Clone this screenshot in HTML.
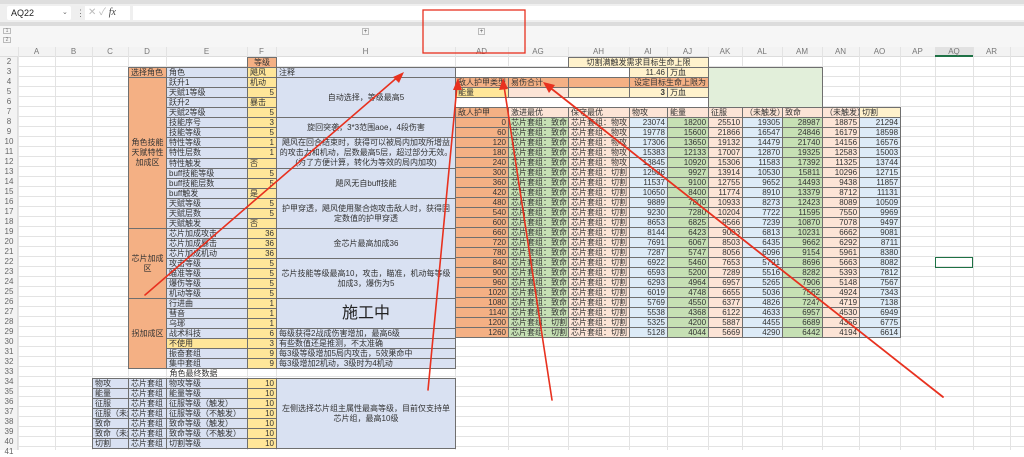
<!DOCTYPE html>
<html><head><meta charset="utf-8"><style>
*{margin:0;padding:0;box-sizing:border-box}
body{width:1024px;height:450px;overflow:hidden;background:#fff;font-family:"Liberation Sans","Noto Sans CJK SC",sans-serif;font-size:8px;color:#333;position:relative}
.abs{position:absolute}
.grid{position:absolute;left:18px;top:57px;width:1006px;height:393px;background:repeating-linear-gradient(to bottom,transparent 0,transparent 9px,#e3e3e3 9px,#e3e3e3 10px)}
.vl{position:absolute;top:47px;width:1px;height:403px;background:#e3e3e3}
table{position:absolute;border-collapse:collapse;table-layout:fixed}
td{height:10px;padding:0 2px;line-height:9px;white-space:nowrap;overflow:hidden;border:1px solid #6f6f6f;font-size:8px}
td.n{border:none;background:transparent}
.o{background:#f4b084}.y{background:#ffe699}.b{background:#d9e1f2}.lo{background:#fce4d6}.g{background:#c6e0b4}.lb{background:#ddebf7}.ly{background:#fff2cc}.lg{background:#e2efda}.w{background:#fff}
.c{text-align:center}.r{text-align:right}
td.wr{white-space:normal;line-height:10px;text-align:center}
.hdr{position:absolute;top:47px;height:10px;font-size:8px;color:#777;text-align:center;line-height:10px}
</style></head><body>
<div class="abs" style="left:0;top:0;width:1024px;height:22px;background:#efefef"></div>
<div class="abs" style="left:0;top:0;width:1024px;height:4px;background:#dedede"></div>
<div class="abs" style="left:7px;top:6px;width:64px;height:14px;background:#fff;border-radius:2px;font-size:9px;line-height:14px;padding-left:4px;color:#222">AQ22<span style="position:absolute;left:55px;color:#666;font-size:7px">⌄</span></div>
<div class="abs" style="left:76px;top:8px;font-size:9px;color:#777">⋮</div>
<div class="abs" style="left:85px;top:6px;width:45px;height:14px;background:#fff;font-size:10px;line-height:14px;color:#bbb;padding-left:3px">✕ ✓ <i style="color:#444;font-family:'Liberation Serif',serif">fx</i></div>
<div class="abs" style="left:133px;top:6px;width:891px;height:14px;background:#fff"></div>
<div class="abs" style="left:0;top:22px;width:1024px;height:4px;background:#dcdcdc"></div>
<div class="abs" style="left:0;top:26px;width:1024px;height:21px;background:#f6f6f6"></div>
<div class="abs" style="left:3px;top:28px;width:8px;height:6px;border:1px solid #bbb;font-size:5px;line-height:5px;text-align:center;color:#777">1</div>
<div class="abs" style="left:3px;top:37px;width:8px;height:6px;border:1px solid #bbb;font-size:5px;line-height:5px;text-align:center;color:#777">2</div>
<div class="abs" style="left:362px;top:28px;width:7px;height:7px;border:1px solid #bbb;font-size:6px;line-height:6px;text-align:center;color:#555">+</div>
<div class="abs" style="left:478px;top:28px;width:7px;height:7px;border:1px solid #bbb;font-size:6px;line-height:6px;text-align:center;color:#555">+</div>
<div class="abs" style="left:0;top:47px;width:1024px;height:10px;background:#f3f3f3;border-bottom:1px solid #ddd"></div>
<div class="abs" style="left:0;top:57px;width:18px;height:393px;background:#f3f3f3;border-right:1px solid #ddd"></div>
<div class="grid"></div>
<div class="vl" style="left:18px"></div><div class="vl" style="left:55px"></div><div class="vl" style="left:92px"></div><div class="vl" style="left:128px"></div><div class="vl" style="left:166px"></div><div class="vl" style="left:247px"></div><div class="vl" style="left:276px"></div><div class="vl" style="left:455px"></div><div class="vl" style="left:508px"></div><div class="vl" style="left:568px"></div><div class="vl" style="left:629px"></div><div class="vl" style="left:667px"></div><div class="vl" style="left:708px"></div><div class="vl" style="left:742px"></div><div class="vl" style="left:782px"></div><div class="vl" style="left:822px"></div><div class="vl" style="left:859px"></div><div class="vl" style="left:900px"></div><div class="vl" style="left:935px"></div><div class="vl" style="left:973px"></div><div class="vl" style="left:1010px"></div>
<div class="hdr" style="left:18px;width:37px">A</div><div class="hdr" style="left:55px;width:37px">B</div><div class="hdr" style="left:92px;width:36px">C</div><div class="hdr" style="left:128px;width:38px">D</div><div class="hdr" style="left:166px;width:81px">E</div><div class="hdr" style="left:247px;width:29px">F</div><div class="hdr" style="left:276px;width:179px">H</div><div class="hdr" style="left:455px;width:53px">AD</div><div class="hdr" style="left:508px;width:60px">AG</div><div class="hdr" style="left:568px;width:61px">AH</div><div class="hdr" style="left:629px;width:38px">AI</div><div class="hdr" style="left:667px;width:41px">AJ</div><div class="hdr" style="left:708px;width:34px">AK</div><div class="hdr" style="left:742px;width:40px">AL</div><div class="hdr" style="left:782px;width:40px">AM</div><div class="hdr" style="left:822px;width:37px">AN</div><div class="hdr" style="left:859px;width:41px">AO</div><div class="hdr" style="left:900px;width:35px">AP</div><div class="hdr" style="left:935px;width:38px;background:#e2e2e2;border-bottom:2px solid #1e7145">AQ</div><div class="hdr" style="left:973px;width:37px">AR</div>
<div class="abs" style="left:0;top:57px;width:18px;font-size:8px;color:#666;text-align:center;line-height:10px">2<br>3<br>4<br>5<br>6<br>7<br>8<br>9<br>10<br>11<br>12<br>13<br>14<br>15<br>16<br>17<br>18<br>19<br>20<br>21<br>22<br>23<br>24<br>25<br>26<br>27<br>28<br>29<br>30<br>31<br>32<br>33<br>34<br>35<br>36<br>37<br>38<br>39<br>40<br>41</div>

<table style="left:92px;top:57px;width:363px">
<colgroup><col style="width:36px"><col style="width:38px"><col style="width:81px"><col style="width:29px"><col style="width:179px"></colgroup>
<tr><td class="n"></td><td class="n"></td><td class="n"></td><td class="o c">等级</td><td class="n"></td></tr>
<tr><td class="n"></td><td class="o">选择角色</td><td class="b">角色</td><td class="y">飓风</td><td class="b">注释</td></tr>
<tr><td class="n"></td><td class="o wr" rowspan="15">角色技能<br>天赋特性<br>加成区</td><td class="b">跃升1</td><td class="y">机动</td><td class="b wr" rowspan="4">自动选择，等级最高5</td></tr>
<tr><td class="n"></td><td class="b">天赋1等级</td><td class="y r">5</td></tr>
<tr><td class="n"></td><td class="b">跃升2</td><td class="y">暴击</td></tr>
<tr><td class="n"></td><td class="b">天赋2等级</td><td class="y r">5</td></tr>
<tr><td class="n"></td><td class="b">技能序号</td><td class="y r">3</td><td class="b wr" rowspan="2">旋回突袭，3*3范围aoe，4段伤害</td></tr>
<tr><td class="n"></td><td class="b">技能等级</td><td class="y r">5</td></tr>
<tr><td class="n"></td><td class="b">特性等级</td><td class="y r">1</td><td class="b wr" rowspan="3">飓风在回合结束时，获得可以被局内加攻所增益的攻击力和机动，层数最高5层，超过部分无效。(为了方便计算，转化为等效的局内加攻)</td></tr>
<tr><td class="n"></td><td class="b">特性层数</td><td class="y r">1</td></tr>
<tr><td class="n"></td><td class="b">特性触发</td><td class="y">否</td></tr>
<tr><td class="n"></td><td class="b">buff技能等级</td><td class="y r">5</td><td class="b wr" rowspan="3">飓风无自buff技能</td></tr>
<tr><td class="n"></td><td class="b">buff技能层数</td><td class="y r">5</td></tr>
<tr><td class="n"></td><td class="b">buff触发</td><td class="y">是</td></tr>
<tr><td class="n"></td><td class="b">天赋等级</td><td class="y r">5</td><td class="b wr" rowspan="3">护甲穿透，飓风使用聚合炮攻击敌人时，获得固定数值的护甲穿透</td></tr>
<tr><td class="n"></td><td class="b">天赋层数</td><td class="y r">5</td></tr>
<tr><td class="n"></td><td class="b">天赋触发</td><td class="y">否</td></tr>
<tr><td class="n"></td><td class="o wr" rowspan="7">芯片加成<br>区</td><td class="b">芯片加成攻击</td><td class="y r">36</td><td class="b wr" rowspan="3">金芯片最高加成36</td></tr>
<tr><td class="n"></td><td class="b">芯片加成暴击</td><td class="y r">36</td></tr>
<tr><td class="n"></td><td class="b">芯片加成机动</td><td class="y r">36</td></tr>
<tr><td class="n"></td><td class="b">攻击等级</td><td class="y r">5</td><td class="b wr" rowspan="4">芯片技能等级最高10，攻击，瞄准，机动每等级加成3，爆伤为5</td></tr>
<tr><td class="n"></td><td class="b">瞄准等级</td><td class="y r">5</td></tr>
<tr><td class="n"></td><td class="b">爆伤等级</td><td class="y r">5</td></tr>
<tr><td class="n"></td><td class="b">机动等级</td><td class="y r">5</td></tr>
<tr><td class="n"></td><td class="o c" rowspan="7">拐加成区</td><td class="b">行进曲</td><td class="y r">1</td><td class="b c" rowspan="3" style="font-size:16px;line-height:28px;color:#222">施工中</td></tr>
<tr><td class="n"></td><td class="b">彗音</td><td class="y r">1</td></tr>
<tr><td class="n"></td><td class="b">乌琊</td><td class="y r">1</td></tr>
<tr><td class="n"></td><td class="b">战术科技</td><td class="y r">6</td><td class="b">每级获得2战成伤害增加，最高6级</td></tr>
<tr><td class="n"></td><td class="y">不使用</td><td class="y r">3</td><td class="b">有些数值还是推测，不太准确</td></tr>
<tr><td class="n"></td><td class="b">振奋套组</td><td class="y r">9</td><td class="b">每3级等级增加5局内攻击，5效果命中</td></tr>
<tr><td class="n"></td><td class="b">集中套组</td><td class="y r">9</td><td class="b">每3级增加2机动，3级时为4机动</td></tr>
<tr><td class="n"></td><td class="n"></td><td class="n" style="padding-left:3px">角色最终数据</td><td class="n"></td><td class="n"></td></tr>
<tr><td class="b">物攻</td><td class="b">芯片套组</td><td class="b">物攻等级</td><td class="y r">10</td><td class="b wr" rowspan="7">左侧选择芯片组主属性最高等级，目前仅支持单芯片组，最高10级</td></tr>
<tr><td class="b">能量</td><td class="b">芯片套组</td><td class="b">能量等级</td><td class="y r">10</td></tr>
<tr><td class="b">征服</td><td class="b">芯片套组</td><td class="b">征服等级（触发）</td><td class="y r">10</td></tr>
<tr><td class="b">征服（未触</td><td class="b">芯片套组</td><td class="b">征服等级（不触发）</td><td class="y r">10</td></tr>
<tr><td class="b">致命</td><td class="b">芯片套组</td><td class="b">致命等级（触发）</td><td class="y r">10</td></tr>
<tr><td class="b">致命（未触</td><td class="b">芯片套组</td><td class="b">致命等级（不触发）</td><td class="y r">10</td></tr>
<tr><td class="b">切割</td><td class="b">芯片套组</td><td class="b">切割等级</td><td class="y r">10</td></tr>
</table>

<table style="left:455px;top:57px;width:445px">
<colgroup><col style="width:53px"><col style="width:60px"><col style="width:61px"><col style="width:38px"><col style="width:41px"><col style="width:34px"><col style="width:40px"><col style="width:40px"><col style="width:37px"><col style="width:41px"></colgroup>
<tr><td class="n"></td><td class="n"></td><td class="ly c" colspan="3">切割满触发需求目标生命上限</td><td class="n"></td><td class="n"></td><td class="n"></td><td class="n"></td><td class="n"></td></tr>
<tr><td class="w" style="border-right:none"></td><td class="w" style="border-left:none;border-right:none"></td><td class="w" style="border-left:none"></td><td class="ly r">11.46</td><td class="ly">万血</td><td class="lg" colspan="3" rowspan="4"></td><td class="n"></td><td class="n"></td></tr>
<tr><td class="o">敌人护甲类型</td><td class="o">易伤合计</td><td class="o"></td><td class="o r" colspan="2">设定目标生命上限为</td><td class="n"></td><td class="n"></td></tr>
<tr><td class="y">能量</td><td class="lo"></td><td class="ly"></td><td class="ly r"><b>3</b></td><td class="ly">万血</td><td class="n"></td><td class="n"></td></tr>
<tr><td class="w" colspan="5" style="border-left:1px solid #6f6f6f"></td><td class="n"></td><td class="n"></td></tr>
<tr><td class="o">敌人护甲</td><td class="lo">激进最优</td><td class="lo">保守最优</td><td class="lo">物攻</td><td class="lo">能量</td><td class="lo">征服</td><td class="lo">（未触发）</td><td class="lo">致命</td><td class="lo">（未触发）</td><td class="ly">切割</td></tr>
<tr><td class="o r">0</td><td class="g">芯片套组：致命</td><td class="lo">芯片套组：物攻</td><td class="lb r">23074</td><td class="g r">18200</td><td class="lo r">25510</td><td class="lb r">19305</td><td class="g r">28987</td><td class="lo r">18875</td><td class="lb r">21294</td></tr>
<tr><td class="o r">60</td><td class="g">芯片套组：致命</td><td class="lo">芯片套组：物攻</td><td class="lb r">19778</td><td class="g r">15600</td><td class="lo r">21866</td><td class="lb r">16547</td><td class="g r">24846</td><td class="lo r">16179</td><td class="lb r">18598</td></tr>
<tr><td class="o r">120</td><td class="g">芯片套组：致命</td><td class="lo">芯片套组：物攻</td><td class="lb r">17306</td><td class="g r">13650</td><td class="lo r">19132</td><td class="lb r">14479</td><td class="g r">21740</td><td class="lo r">14156</td><td class="lb r">16576</td></tr>
<tr><td class="o r">180</td><td class="g">芯片套组：致命</td><td class="lo">芯片套组：物攻</td><td class="lb r">15383</td><td class="g r">12133</td><td class="lo r">17007</td><td class="lb r">12870</td><td class="g r">19325</td><td class="lo r">12583</td><td class="lb r">15003</td></tr>
<tr><td class="o r">240</td><td class="g">芯片套组：致命</td><td class="lo">芯片套组：物攻</td><td class="lb r">13845</td><td class="g r">10920</td><td class="lo r">15306</td><td class="lb r">11583</td><td class="g r">17392</td><td class="lo r">11325</td><td class="lb r">13744</td></tr>
<tr><td class="o r">300</td><td class="g">芯片套组：致命</td><td class="lo">芯片套组：切割</td><td class="lb r">12586</td><td class="g r">9927</td><td class="lo r">13914</td><td class="lb r">10530</td><td class="g r">15811</td><td class="lo r">10296</td><td class="lb r">12715</td></tr>
<tr><td class="o r">360</td><td class="g">芯片套组：致命</td><td class="lo">芯片套组：切割</td><td class="lb r">11537</td><td class="g r">9100</td><td class="lo r">12755</td><td class="lb r">9652</td><td class="g r">14493</td><td class="lo r">9438</td><td class="lb r">11857</td></tr>
<tr><td class="o r">420</td><td class="g">芯片套组：致命</td><td class="lo">芯片套组：切割</td><td class="lb r">10650</td><td class="g r">8400</td><td class="lo r">11774</td><td class="lb r">8910</td><td class="g r">13379</td><td class="lo r">8712</td><td class="lb r">11131</td></tr>
<tr><td class="o r">480</td><td class="g">芯片套组：致命</td><td class="lo">芯片套组：切割</td><td class="lb r">9889</td><td class="g r">7800</td><td class="lo r">10933</td><td class="lb r">8273</td><td class="g r">12423</td><td class="lo r">8089</td><td class="lb r">10509</td></tr>
<tr><td class="o r">540</td><td class="g">芯片套组：致命</td><td class="lo">芯片套组：切割</td><td class="lb r">9230</td><td class="g r">7280</td><td class="lo r">10204</td><td class="lb r">7722</td><td class="g r">11595</td><td class="lo r">7550</td><td class="lb r">9969</td></tr>
<tr><td class="o r">600</td><td class="g">芯片套组：致命</td><td class="lo">芯片套组：切割</td><td class="lb r">8653</td><td class="g r">6825</td><td class="lo r">9566</td><td class="lb r">7239</td><td class="g r">10870</td><td class="lo r">7078</td><td class="lb r">9497</td></tr>
<tr><td class="o r">660</td><td class="g">芯片套组：致命</td><td class="lo">芯片套组：切割</td><td class="lb r">8144</td><td class="g r">6423</td><td class="lo r">9003</td><td class="lb r">6813</td><td class="g r">10231</td><td class="lo r">6662</td><td class="lb r">9081</td></tr>
<tr><td class="o r">720</td><td class="g">芯片套组：致命</td><td class="lo">芯片套组：切割</td><td class="lb r">7691</td><td class="g r">6067</td><td class="lo r">8503</td><td class="lb r">6435</td><td class="g r">9662</td><td class="lo r">6292</td><td class="lb r">8711</td></tr>
<tr><td class="o r">780</td><td class="g">芯片套组：致命</td><td class="lo">芯片套组：切割</td><td class="lb r">7287</td><td class="g r">5747</td><td class="lo r">8056</td><td class="lb r">6096</td><td class="g r">9154</td><td class="lo r">5961</td><td class="lb r">8380</td></tr>
<tr><td class="o r">840</td><td class="g">芯片套组：致命</td><td class="lo">芯片套组：切割</td><td class="lb r">6922</td><td class="g r">5460</td><td class="lo r">7653</td><td class="lb r">5791</td><td class="g r">8696</td><td class="lo r">5663</td><td class="lb r">8082</td></tr>
<tr><td class="o r">900</td><td class="g">芯片套组：致命</td><td class="lo">芯片套组：切割</td><td class="lb r">6593</td><td class="g r">5200</td><td class="lo r">7289</td><td class="lb r">5516</td><td class="g r">8282</td><td class="lo r">5393</td><td class="lb r">7812</td></tr>
<tr><td class="o r">960</td><td class="g">芯片套组：致命</td><td class="lo">芯片套组：切割</td><td class="lb r">6293</td><td class="g r">4964</td><td class="lo r">6957</td><td class="lb r">5265</td><td class="g r">7906</td><td class="lo r">5148</td><td class="lb r">7567</td></tr>
<tr><td class="o r">1020</td><td class="g">芯片套组：致命</td><td class="lo">芯片套组：切割</td><td class="lb r">6019</td><td class="g r">4748</td><td class="lo r">6655</td><td class="lb r">5036</td><td class="g r">7562</td><td class="lo r">4924</td><td class="lb r">7343</td></tr>
<tr><td class="o r">1080</td><td class="g">芯片套组：致命</td><td class="lo">芯片套组：切割</td><td class="lb r">5769</td><td class="g r">4550</td><td class="lo r">6377</td><td class="lb r">4826</td><td class="g r">7247</td><td class="lo r">4719</td><td class="lb r">7138</td></tr>
<tr><td class="o r">1140</td><td class="g">芯片套组：致命</td><td class="lo">芯片套组：切割</td><td class="lb r">5538</td><td class="g r">4368</td><td class="lo r">6122</td><td class="lb r">4633</td><td class="g r">6957</td><td class="lo r">4530</td><td class="lb r">6949</td></tr>
<tr><td class="o r">1200</td><td class="g">芯片套组：切割</td><td class="lo">芯片套组：切割</td><td class="lb r">5325</td><td class="g r">4200</td><td class="lo r">5887</td><td class="lb r">4455</td><td class="g r">6689</td><td class="lo r">4356</td><td class="lb r">6775</td></tr>
<tr><td class="o r">1260</td><td class="g">芯片套组：切割</td><td class="lo">芯片套组：切割</td><td class="lb r">5128</td><td class="g r">4044</td><td class="lo r">5669</td><td class="lb r">4290</td><td class="g r">6442</td><td class="lo r">4194</td><td class="lb r">6614</td></tr>
</table>

<div class="abs" style="left:935px;top:257px;width:38px;height:11px;border:1.5px solid #1e7145"></div>

<svg class="abs" style="left:0;top:0" width="1024" height="450">
<g stroke="#e8311f" fill="none" stroke-linecap="round">
<rect x="423" y="10" width="102" height="43" stroke-width="1.3"/>
<line x1="145" y1="295" x2="400" y2="75" stroke-width="1.6"/>
<line x1="428" y1="390" x2="457" y2="86" stroke-width="1.6"/>
<line x1="552" y1="400" x2="504" y2="86" stroke-width="1.6"/>
<line x1="943" y1="397" x2="548" y2="86" stroke-width="1.8"/>
</g>
<g fill="#e8311f">
<polygon points="404,72 393,77 399,83"/>
<polygon points="458,78 453,90 462,90"/>
<polygon points="503,78 499,90 508,89"/>
<polygon points="543,82 549,93 555,85"/>
</g>
</svg>
</body></html>
